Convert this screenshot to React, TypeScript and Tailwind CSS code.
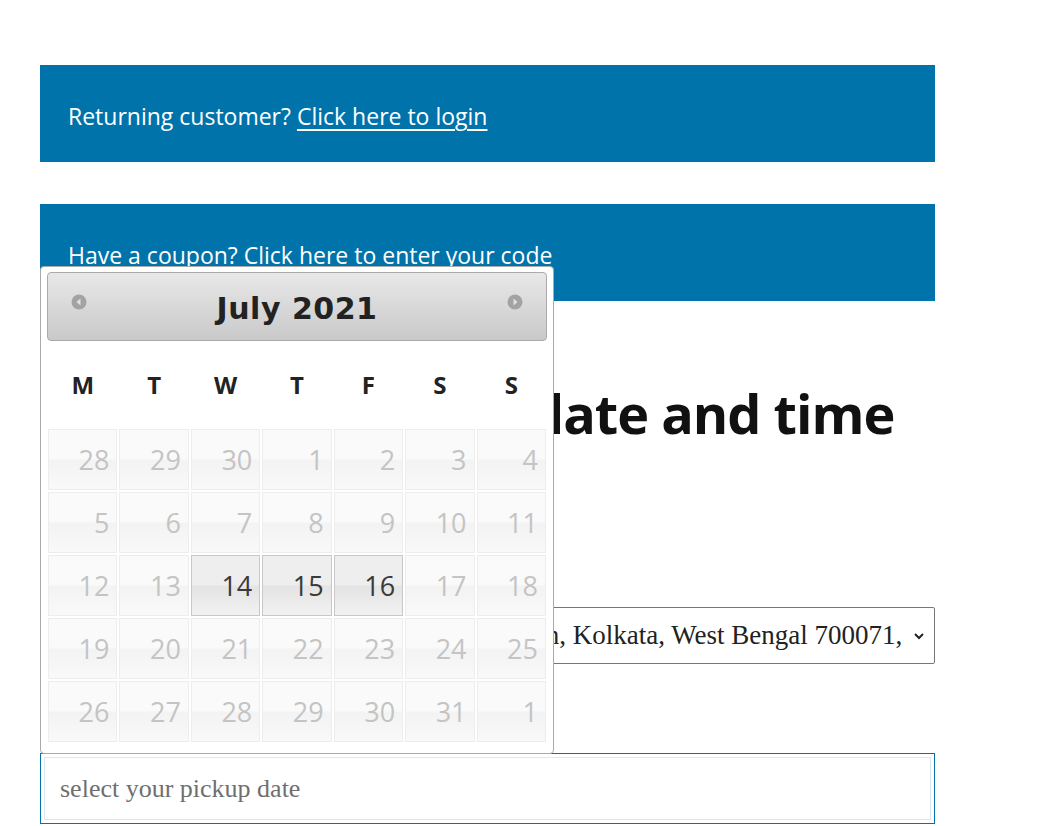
import React from "react";

const weeks: number[][] = [
  [28, 29, 30, 1, 2, 3, 4],
  [5, 6, 7, 8, 9, 10, 11],
  [12, 13, 14, 15, 16, 17, 18],
  [19, 20, 21, 22, 23, 24, 25],
  [26, 27, 28, 29, 30, 31, 1],
];

const days = ["M", "T", "W", "T", "F", "S", "S"];

function NavIcon({ dir }: { dir: "prev" | "next" }) {
  return (
    <svg width="16" height="16" viewBox="0 0 16 16">
      <circle cx="8" cy="8" r="7.5" fill="#a3a3a3" />
      {dir === "prev" ? (
        <path d="M9.5 4.5 L5.5 8 L9.5 11.5 Z" fill="#e2e2e2" />
      ) : (
        <path d="M6.5 4.5 L10.5 8 L6.5 11.5 Z" fill="#e2e2e2" />
      )}
    </svg>
  );
}

function Datepicker() {
  return (
    <div className="absolute left-[40px] top-[266px] w-[514px] h-[488px] bg-white border border-[#aaaaaa] rounded-[4px] px-[6px] pt-[5px]">
      {/* header */}
      <div className="relative h-[69px] rounded-[4px] border border-[#aaaaaa] bg-[linear-gradient(to_bottom,#e8e8e8,#c9c9c9)] flex items-center justify-center pt-[3px]">
        <span className="absolute left-[23px] top-[21px]">
          <NavIcon dir="prev" />
        </span>
        <span className="font-['DejaVu_Sans',sans-serif] font-bold text-[30px] text-[#222222] tracking-[0.5px]">
          July 2021
        </span>
        <span className="absolute right-[23px] top-[21px]">
          <NavIcon dir="next" />
        </span>
      </div>

      {/* weekday names */}
      <div className="grid grid-cols-7 gap-[2px] px-[1px] h-[88px] items-center font-['Open_Sans',sans-serif] font-bold text-[24px] text-[#222222]">
        {days.map((d, i) => (
          <div key={i} className="text-center">
            {d}
          </div>
        ))}
      </div>

      {/* day cells */}
      <div className="grid grid-cols-7 gap-[2px] px-[1px] font-['Open_Sans',sans-serif] text-[27px]">
        {weeks.flatMap((w, r) =>
          w.map((n, c) => {
            const active = r === 2 && c >= 2 && c <= 4;
            return (
              <div
                key={r + "-" + c}
                className={
                  active
                    ? "h-[61px] border border-[#c8c8c8] bg-[linear-gradient(to_bottom,#eeeeee_0%,#eeeeee_48%,#e4e4e4_52%,#f1f1f1_100%)] text-[#3a3a3a] flex items-center justify-end pr-[7px] pt-[2px]"
                    : "h-[61px] border border-[#ededed] bg-[linear-gradient(to_bottom,#fafafa_0%,#fafafa_48%,#f3f3f3_52%,#f9f9f9_100%)] text-[#c4c4c4] flex items-center justify-end pr-[7px] pt-[2px]"
                }
              >
                {n}
              </div>
            );
          })
        )}
      </div>
    </div>
  );
}

export default function App() {
  return (
    <div className="relative min-h-[826px] bg-white font-['Open_Sans',sans-serif]">
      <div className="ml-[40px] w-[895px] pt-[65px]">
        <div className="h-[97px] bg-[#0073aa] text-white text-[23px] flex items-center px-[28px] pt-[6px]">
          <span>
            Returning customer?{" "}
            <a href="#" className="underline underline-offset-[4px]">
              Click here to login
            </a>
          </span>
        </div>

        <div className="mt-[42px] h-[97px] bg-[#0073aa] text-white text-[23px] flex items-center px-[28px] pt-[6px]">
          <a href="#" className="underline underline-offset-[4px]">
            Have a coupon? Click here to enter your code
          </a>
        </div>

        <h2 className="mt-[76px] text-[54px] leading-[72px] font-bold tracking-[-1px] text-[#111111] whitespace-nowrap">
          Select your pickup date and time
        </h2>

        <label className="block mt-[122px] text-[20px] text-[#333333]">Pickup location</label>

        <div className="mt-[6px] h-[57px] border border-[#767676] rounded-[2px] flex items-center pl-[25px] pr-[8px] font-['Liberation_Serif',serif] text-[27px] text-[#222222]">
          <span className="flex-1 overflow-hidden whitespace-nowrap">
            4, Metro Station, Mother Teresa Sarani, Elgin, Kolkata, West Bengal 700071, India
          </span>
          <svg width="14" height="14" viewBox="0 0 14 14" className="ml-[4px] shrink-0">
            <path d="M3 5 L7 9 L11 5" fill="none" stroke="#222" strokeWidth="2" />
          </svg>
        </div>

        <label className="block mt-[55px] text-[20px] text-[#333333]">Pickup date</label>

        <div className="mt-[4px] h-[71px] border border-[#0073aa] p-[3px]">
          <div className="h-full border border-[#dde7ee] flex items-center pl-[15px] font-['Liberation_Serif',serif] text-[26px] text-[#6f6f6f]">
            select your pickup date
          </div>
        </div>
      </div>

      <Datepicker />
    </div>
  );
}
